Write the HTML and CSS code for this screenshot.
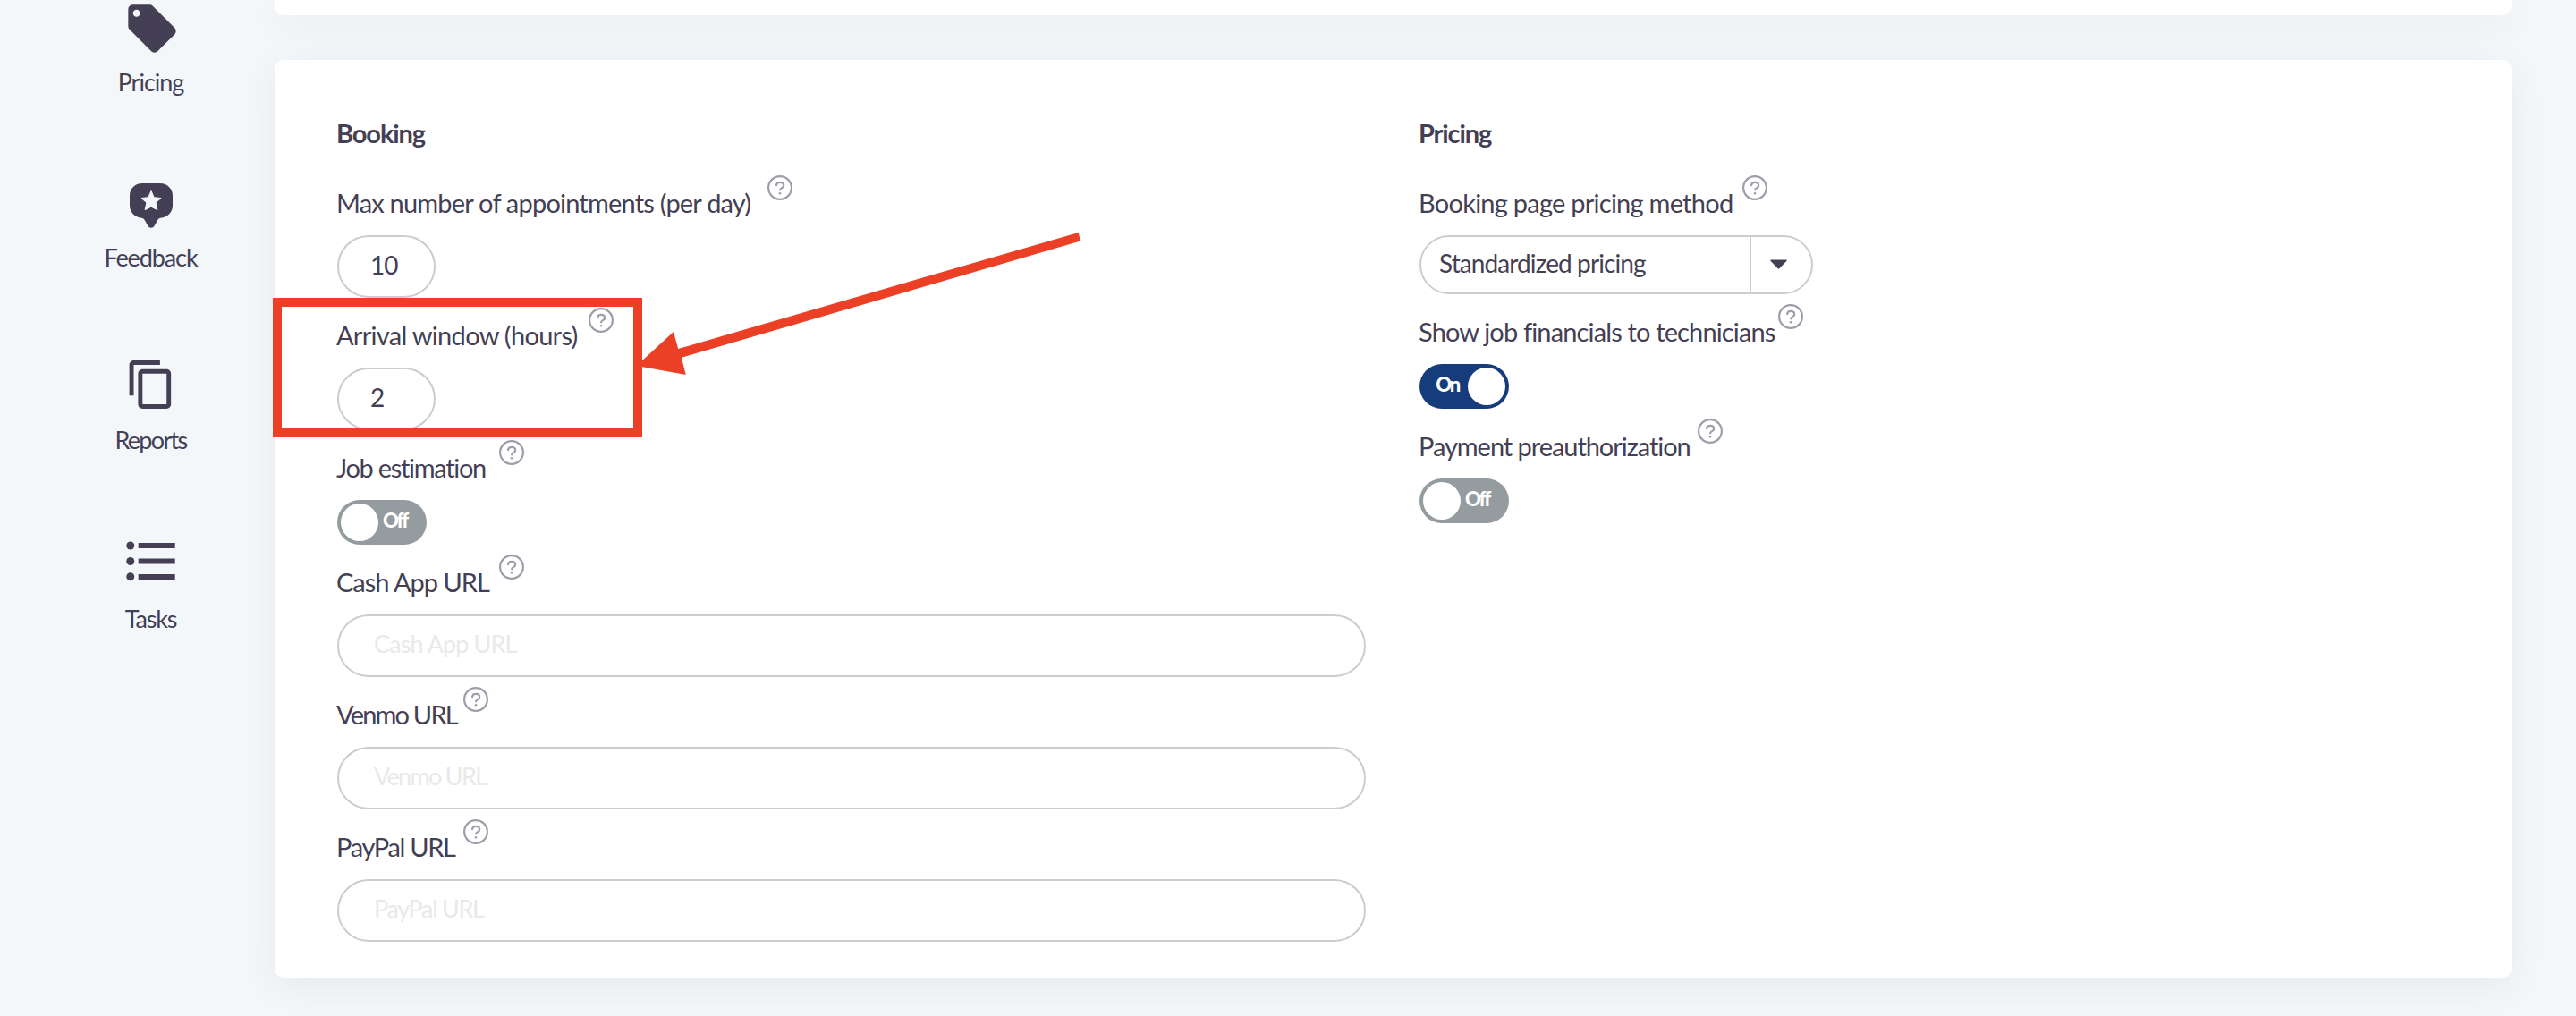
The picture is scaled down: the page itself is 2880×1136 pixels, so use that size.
FILE: index.html
```
<!DOCTYPE html>
<html lang="en">

<head>
    <meta charset="UTF-8">
    <meta name="viewport" content="width=device-width, initial-scale=1.0">
    <title>Settings</title>
    <link rel="stylesheet" href="styles.css">
</head>

<body>
    <svg class="defs" width="0" height="0">
        <symbol id="help" viewBox="0 0 28 28">
            <circle cx="14" cy="14" r="12.9" fill="none" stroke="currentColor" stroke-width="2.2"/>
            <path d="M10 11.2c.3-2.2 1.9-3.3 4.1-3.3 2.3 0 4.1 1.4 4.1 3.5 0 2.7-4 2.6-4.1 5" fill="none" stroke="currentColor" stroke-width="2.2" stroke-linecap="round"/>
            <circle cx="14" cy="20.3" r="1.3" fill="currentColor"/>
        </symbol>
    </svg>

    <div class="page">
        <nav class="sidebar">
            <a class="nav-item nav-pricing">
                <svg width="64" height="64" viewBox="0 0 24 24">
                    <path d="M21.41 11.58l-9-9C12.05 2.22 11.55 2 11 2H4c-1.1 0-2 .9-2 2v7c0 .55.22 1.05.59 1.42l9 9c.36.36.86.58 1.41.58.55 0 1.05-.22 1.41-.59l7-7c.37-.36.59-.86.59-1.41 0-.55-.23-1.06-.59-1.42zM5.5 7C4.67 7 4 6.33 4 5.5S4.67 4 5.5 4 7 4.67 7 5.5 6.33 7 5.5 7z"/>
                </svg>
                <span>Pricing</span>
            </a>
            <a class="nav-item nav-feedback">
                <svg width="64" height="64" viewBox="0 0 64 64">
                    <path d="M21 9h20c8 0 14 6 14 13.500v11.500c0 7-5.500 13-13.500 13.800-1.600.2-2.500 1-3.300 2.400l-3.600 6.300c-1.600 3-5.600 3-7.200 0l-3.600-6.300c-.8-1.400-1.700-2.200-3.300-2.400C12.500 47 7 41 7 34V22.500C7 15 13 9 21 9z"/>
                    <path class="star" d="M31 17.500l3.200 7.200 7.800.8-5.900 5.200 1.800 8-6.900-3.500-6.900 3.500 1.800-8-5.900-5.200 7.800-.8z"/>
                </svg>
                <span>Feedback</span>
            </a>
            <a class="nav-item nav-reports">
                <svg width="64" height="64" viewBox="0 0 64 64">
                    <path transform="translate(1.700 .6) scale(2.450)" d="M16 1H4c-1.100 0-2 .9-2 2v14h2V3h12V1zm3 4H8c-1.100 0-2 .9-2 2v14c0 1.100.9 2 2 2h11c1.100 0 2-.9 2-2V7c0-1.100-.9-2-2-2zm0 16H8V7h11v14z"/>
                </svg>
                <span>Reports</span>
            </a>
            <a class="nav-item nav-tasks">
                <svg width="64" height="64" viewBox="0 0 64 64">
                    <circle cx="7.800" cy="10" r="4.500"/>
                    <circle cx="7.800" cy="27.500" r="4.500"/>
                    <circle cx="7.800" cy="44.800" r="4.500"/>
                    <path d="M16.700 7h41v6h-41zM16.700 24.500h41v6h-41zM16.700 42h41v6h-41z"/>
                </svg>
                <span>Tasks</span>
            </a>
        </nav>

        <main class="content">
            <section class="card card-previous"></section>

            <section class="card settings">
                <div class="column booking">
                    <h2>Booking</h2>

                    <div class="field max-appointments">
                        <div class="field-label"><label>Max number of appointments (per day)</label><svg class="help"><use href="#help"/></svg></div>
                        <div class="input small">10</div>
                    </div>
                    <div class="field arrival-window">
                        <div class="field-label"><label>Arrival window (hours)</label><svg class="help"><use href="#help"/></svg></div>
                        <div class="input small">2</div>
                    </div>
                    <div class="field job-estimation">
                        <div class="field-label"><label>Job estimation</label><svg class="help"><use href="#help"/></svg></div>
                        <div class="toggle"><span class="knob"></span><span>Off</span></div>
                    </div>
                    <div class="field cash-app">
                        <div class="field-label"><label>Cash App URL</label><svg class="help"><use href="#help"/></svg></div>
                        <div class="input placeholder">Cash App URL</div>
                    </div>
                    <div class="field venmo">
                        <div class="field-label"><label>Venmo URL</label><svg class="help"><use href="#help"/></svg></div>
                        <div class="input placeholder">Venmo URL</div>
                    </div>
                    <div class="field paypal">
                        <div class="field-label"><label>PayPal URL</label><svg class="help"><use href="#help"/></svg></div>
                        <div class="input placeholder">PayPal URL</div>
                    </div>
                </div>

                <div class="column pricing">
                    <h2>Pricing</h2>

                    <div class="field pricing-method">
                        <div class="field-label"><label>Booking page pricing method</label><svg class="help"><use href="#help"/></svg></div>
                        <div class="select">
                            <span class="select-value">Standardized pricing</span>
                            <span class="select-arrow">
                                <svg width="19" height="12" viewBox="0 0 19 12"><path d="M1 .5h17c.7 0 .9.7.5 1.200l-8.200 8.600c-.5.5-1.100.5-1.600 0L.5 1.700C.1 1.200.3.5 1 .5z"/></svg>
                            </span>
                        </div>
                    </div>
                    <div class="field job-financials">
                        <div class="field-label"><label>Show job financials to technicians</label><svg class="help"><use href="#help"/></svg></div>
                        <div class="toggle on"><span>On</span><span class="knob"></span></div>
                    </div>
                    <div class="field preauthorization">
                        <div class="field-label"><label>Payment preauthorization</label><svg class="help"><use href="#help"/></svg></div>
                        <div class="toggle"><span class="knob"></span><span>Off</span></div>
                    </div>
                </div>
            </section>
        </main>

        <!-- callout over the arrival window field -->
        <svg class="callout" width="904" height="230" viewBox="305 259 904 230">
            <rect x="310" y="338" width="403" height="146" fill="none" stroke="#eb4026" stroke-width="10"/>
            <path d="M1205.700 260l2.200 9.500L761.800 399.700l5 19.300-55.200-10.100L753 371l5.200 19z" fill="#eb4026"/>
        </svg>
    </div>
</body>

</html>
```
FILE: styles.css
```
* {
    box-sizing: border-box;
}

body {
    margin: 0;
    background-color: #f3f7fa;
    color: #443f54;
    font-family: 'Lato', sans-serif;
    font-size: 29px;
    line-height: 32px;
    letter-spacing: -1px;
}

.defs {
    display: block;
}

.page {
    position: relative;
    display: flex;
    height: 1136px;
    overflow: hidden;
}

/* sidebar */
.sidebar {
    display: flex;
    flex-direction: column;
    width: 307px;
    padding-left: 33px;
}

.nav-item {
    display: flex;
    flex-direction: column;
    align-items: center;
    gap: 12px;
    font-size: 27px;
}

.nav-item svg {
    fill: #443f54;
}

.nav-item span {
    margin-left: -3px;
}

.nav-item .star {
    fill: #f3f7fa;
    stroke: #f3f7fa;
    stroke-width: 1;
    stroke-linejoin: round;
}

.nav-pricing {
    margin-bottom: 88px;
}

.nav-feedback {
    margin-bottom: 96px;
    letter-spacing: -1.1px;
}

.nav-reports {
    margin-bottom: 92px;
    letter-spacing: -1.7px;
}

.nav-tasks {
    letter-spacing: -1.2px;
}

/* cards */
.content {
    display: flex;
    flex-direction: column;
    gap: 50px;
    width: 2501px;
}

.card {
    background-color: #fff;
    border-radius: 10px;
    box-shadow: 0 10px 40px rgba(0, 0, 0, 0.06);
}

.card-previous {
    height: 17px;
    border-radius: 0 0 10px 10px;
}

.settings {
    display: flex;
    gap: 60px;
    height: 1026px;
    padding: 66px 70px 0;
}

.column {
    width: 1150px;
}

h2 {
    height: 52px;
    margin: 0 0 0 -1px;
    font-size: 29px;
    font-weight: 700;
    letter-spacing: -1.1px;
}

.field-label {
    display: flex;
    height: 78px;
}

.field-label label {
    margin-left: -1px;
    margin-right: 1px;
    padding-top: 26px;
    white-space: nowrap;
}

.help {
    width: 28px;
    height: 28px;
    margin-top: 11px;
    color: #9f9daa;
}

/* label widths */
.max-appointments label {
    width: 481px;
    letter-spacing: -0.8px;
}

.arrival-window label {
    width: 281px;
    letter-spacing: -0.7px;
}

.job-estimation label {
    width: 181px;
    letter-spacing: -1.3px;
}

.cash-app label {
    width: 181px;
    letter-spacing: -1px;
}

.venmo label {
    width: 141px;
    letter-spacing: -1.8px;
}

.paypal label {
    width: 141px;
    letter-spacing: -1.3px;
}

.pricing-method label {
    width: 361px;
    letter-spacing: -0.75px;
}

.job-financials label {
    width: 401px;
    letter-spacing: -0.85px;
}

.preauthorization label {
    width: 311px;
    letter-spacing: -1.05px;
}

/* controls */
.input {
    display: flex;
    align-items: center;
    height: 70px;
    padding: 0 40px 5px;
    border: 2px solid #cdcdcd;
    border-radius: 35px;
    font-size: 28px;
}

.input.small {
    width: 110px;
    padding-left: 35px;
}

.input.placeholder {
    padding-left: 39px;
    color: #e9e9e9;
    font-size: 27px;
    letter-spacing: -0.9px;
}

.venmo .input.placeholder {
    letter-spacing: -1.7px;
}

.paypal .input.placeholder {
    letter-spacing: -1.3px;
}

.select {
    display: flex;
    width: 440px;
    height: 66px;
    border: 2px solid #cdcdcd;
    border-radius: 33px;
    font-size: 28px;
}

.select-value {
    flex: 1;
    padding: 13px 0 0 20px;
    letter-spacing: -0.9px;
}

.select-arrow {
    display: flex;
    align-items: center;
    width: 69px;
    padding-left: 21px;
    border-left: 2px solid #cdcdcd;
}

.select-arrow svg {
    fill: #443f54;
}

.toggle {
    display: flex;
    align-items: center;
    gap: 5px;
    width: 100px;
    height: 50px;
    padding: 0 4px;
    border-radius: 25px;
    background-color: #959c9f;
    color: #fff;
    font-size: 22px;
    font-weight: 900;
    line-height: 22px;
    letter-spacing: -2.2px;
}

.toggle span {
    padding-bottom: 4px;
}

.toggle .knob {
    width: 42px;
    height: 42px;
    border-radius: 50%;
    background-color: #fff;
}

.toggle.on {
    justify-content: flex-end;
    gap: 10px;
    background-color: #163c7c;
}

.callout {
    position: absolute;
    top: 259px;
    left: 305px;
}
```
